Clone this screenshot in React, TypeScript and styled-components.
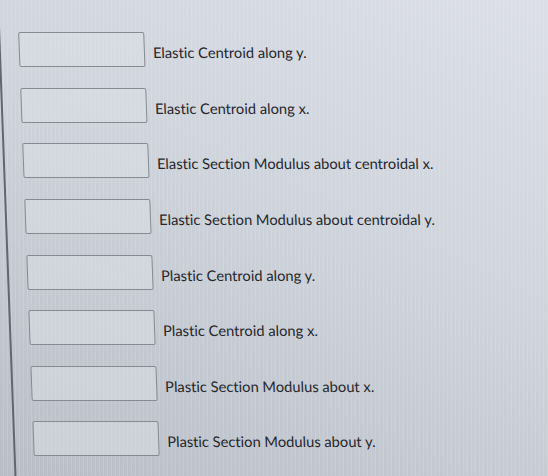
import styled, { createGlobalStyle } from "styled-components";

const labels = [
  "Elastic Centroid along y.",
  "Elastic Centroid along x.",
  "Elastic Section Modulus about centroidal x.",
  "Elastic Section Modulus about centroidal y.",
  "Plastic Centroid along y.",
  "Plastic Centroid along x.",
  "Plastic Section Modulus about x.",
  "Plastic Section Modulus about y.",
];

const GlobalStyle = createGlobalStyle`
  html, body {
    margin: 0;
    padding: 0;
    width: 548px;
    height: 476px;
    overflow: hidden;
  }
  body {
    font-family: Lato, "Open Sans", sans-serif;
    background:
      repeating-linear-gradient(
        90deg,
        rgba(255, 255, 255, 0) 0px,
        rgba(255, 255, 255, 0) 3px,
        rgba(255, 255, 255, 0.12) 3px,
        rgba(255, 255, 255, 0.12) 4px
      ),
      linear-gradient(205deg, #dcdfe8 0%, #cfd3db 45%, #b9bdc5 100%);
  }
`;

export default function App() {
  return (
    <>
      <GlobalStyle />
      <StyledPanel>
        {labels.map((label, i) => (
          <StyledRow key={i}>
            <StyledAnswerBox aria-label={label} />
            <StyledLabel>{label}</StyledLabel>
          </StyledRow>
        ))}
      </StyledPanel>
    </>
  );
}

// the photo is taken at a slight angle, so the whole panel leans right
const StyledPanel = styled.div`
  display: flex;
  flex-direction: column;
  gap: 20px;
  box-sizing: border-box;
  height: 476px;
  margin-left: -3px;
  padding: 32px 0 0 18px;
  border-left: 2px solid #62676f;
  transform: skewX(2.1deg);
  transform-origin: 0 0;
`;

const StyledRow = styled.div`
  display: flex;
  align-items: center;
  gap: 8px;
  height: 35.6px;
`;

const StyledAnswerBox = styled.div`
  flex-shrink: 0;
  width: 126px;
  height: 35px;
  box-sizing: border-box;
  border: 1.5px solid #878a91;
  border-radius: 2px;
  background: rgba(220, 223, 230, 0.5);
`;

const StyledLabel = styled.span`
  margin-top: 5px;
  font-size: 14.7px;
  color: #26282d;
  white-space: nowrap;
  font-variant-ligatures: none;
`;
